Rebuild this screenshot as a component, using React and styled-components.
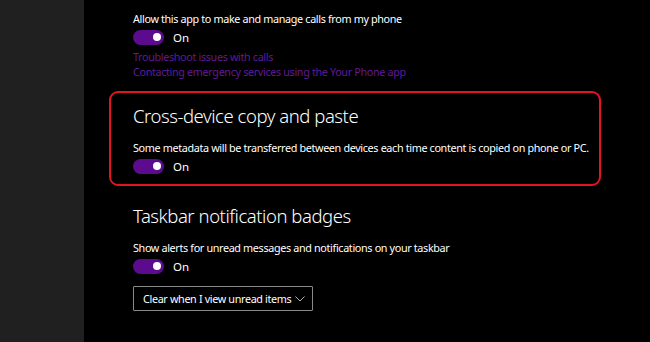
import React from "react";
import styled, { createGlobalStyle } from "styled-components";

const Global = createGlobalStyle`
  html, body { margin: 0; padding: 0; background: #000; }
  body { font-family: "Noto Sans", "Open Sans", sans-serif; color: #fff; }
  * { box-sizing: border-box; }
`;

const Page = styled.div`
  display: flex;
  width: 650px;
  height: 342px;
  overflow: hidden;
  background: #000;
`;

const Sidebar = styled.aside`
  width: 84px;
  flex: none;
  background: #202020;
`;

const Main = styled.main`
  flex: 1;
  display: flex;
  flex-direction: column;
  padding: 9px 0 0 25px;
`;

const Section = styled.section`
  width: 492px;
  display: flex;
  flex-direction: column;
  align-items: flex-start;
  border: 2px solid ${(p) => (p.$highlight ? "#e3141f" : "transparent")};
  border-radius: 9px;
  padding: ${(p) => p.$pad || "0 0 0 22px"};
`;

const Title = styled.h2`
  margin: 0 0 10px;
  font-size: 18.5px;
  line-height: 28px;
  font-weight: 300;
  letter-spacing: -0.45px;
`;

const Desc = styled.p`
  margin: 0;
  font-size: 10.8px;
  line-height: 16px;
  letter-spacing: -0.35px;
  white-space: nowrap;
`;

const ToggleRow = styled.div`
  display: flex;
  align-items: center;
  gap: 9px;
  height: 16px;
  margin-top: 2px;
  font-size: 11.5px;
`;

const Track = styled.span`
  position: relative;
  width: 31px;
  height: 15px;
  border-radius: 8px;
  background: #5c0b8e;
`;

const Knob = styled.span`
  position: absolute;
  top: 3.5px;
  right: 3.5px;
  width: 8px;
  height: 8px;
  border-radius: 50%;
  background: #fff;
`;

const Links = styled.div`
  display: flex;
  flex-direction: column;
  margin-top: 4px;
`;

const Link = styled.a`
  font-size: 10.8px;
  line-height: 15px;
  letter-spacing: -0.35px;
  color: #601a99;
  text-decoration: none;
`;

const Dropdown = styled.button`
  margin-top: 12px;
  width: 180px;
  height: 25px;
  display: flex;
  align-items: center;
  justify-content: space-between;
  padding: 0 7px 0 9px;
  background: #000;
  border: 1px solid #8a8a8a;
  border-radius: 1px;
  color: #fff;
  font-family: inherit;
  font-size: 10.8px;
  letter-spacing: -0.35px;
  white-space: nowrap;
`;

const Toggle = () => (
  <ToggleRow>
    <Track>
      <Knob />
    </Track>
    <span>On</span>
  </ToggleRow>
);

export default function App() {
  return (
    <>
      <Global />
      <Page>
        <Sidebar />
        <Main>
          <Section $pad="0 0 10px 22px">
            <Desc>Allow this app to make and manage calls from my phone</Desc>
            <Toggle />
            <Links>
              <Link>Troubleshoot issues with calls</Link>
              <Link>Contacting emergency services using the Your Phone app</Link>
            </Links>
          </Section>
          <Section $highlight $pad="9px 0 10px 22px">
            <Title>Cross-device copy and paste</Title>
            <Desc>Some metadata will be transferred between devices each time content is copied on phone or PC.</Desc>
            <Toggle />
          </Section>
          <Section $pad="14px 0 0 22px">
            <Title>Taskbar notification badges</Title>
            <Desc>Show alerts for unread messages and notifications on your taskbar</Desc>
            <Toggle />
            <Dropdown>
              <span>Clear when I view unread items</span>
              <svg width="10" height="6" viewBox="0 0 10 6">
                <polyline points="0.5,0.5 5,5 9.5,0.5" fill="none" stroke="#b0b0b0" strokeWidth="1" />
              </svg>
            </Dropdown>
          </Section>
        </Main>
      </Page>
    </>
  );
}
